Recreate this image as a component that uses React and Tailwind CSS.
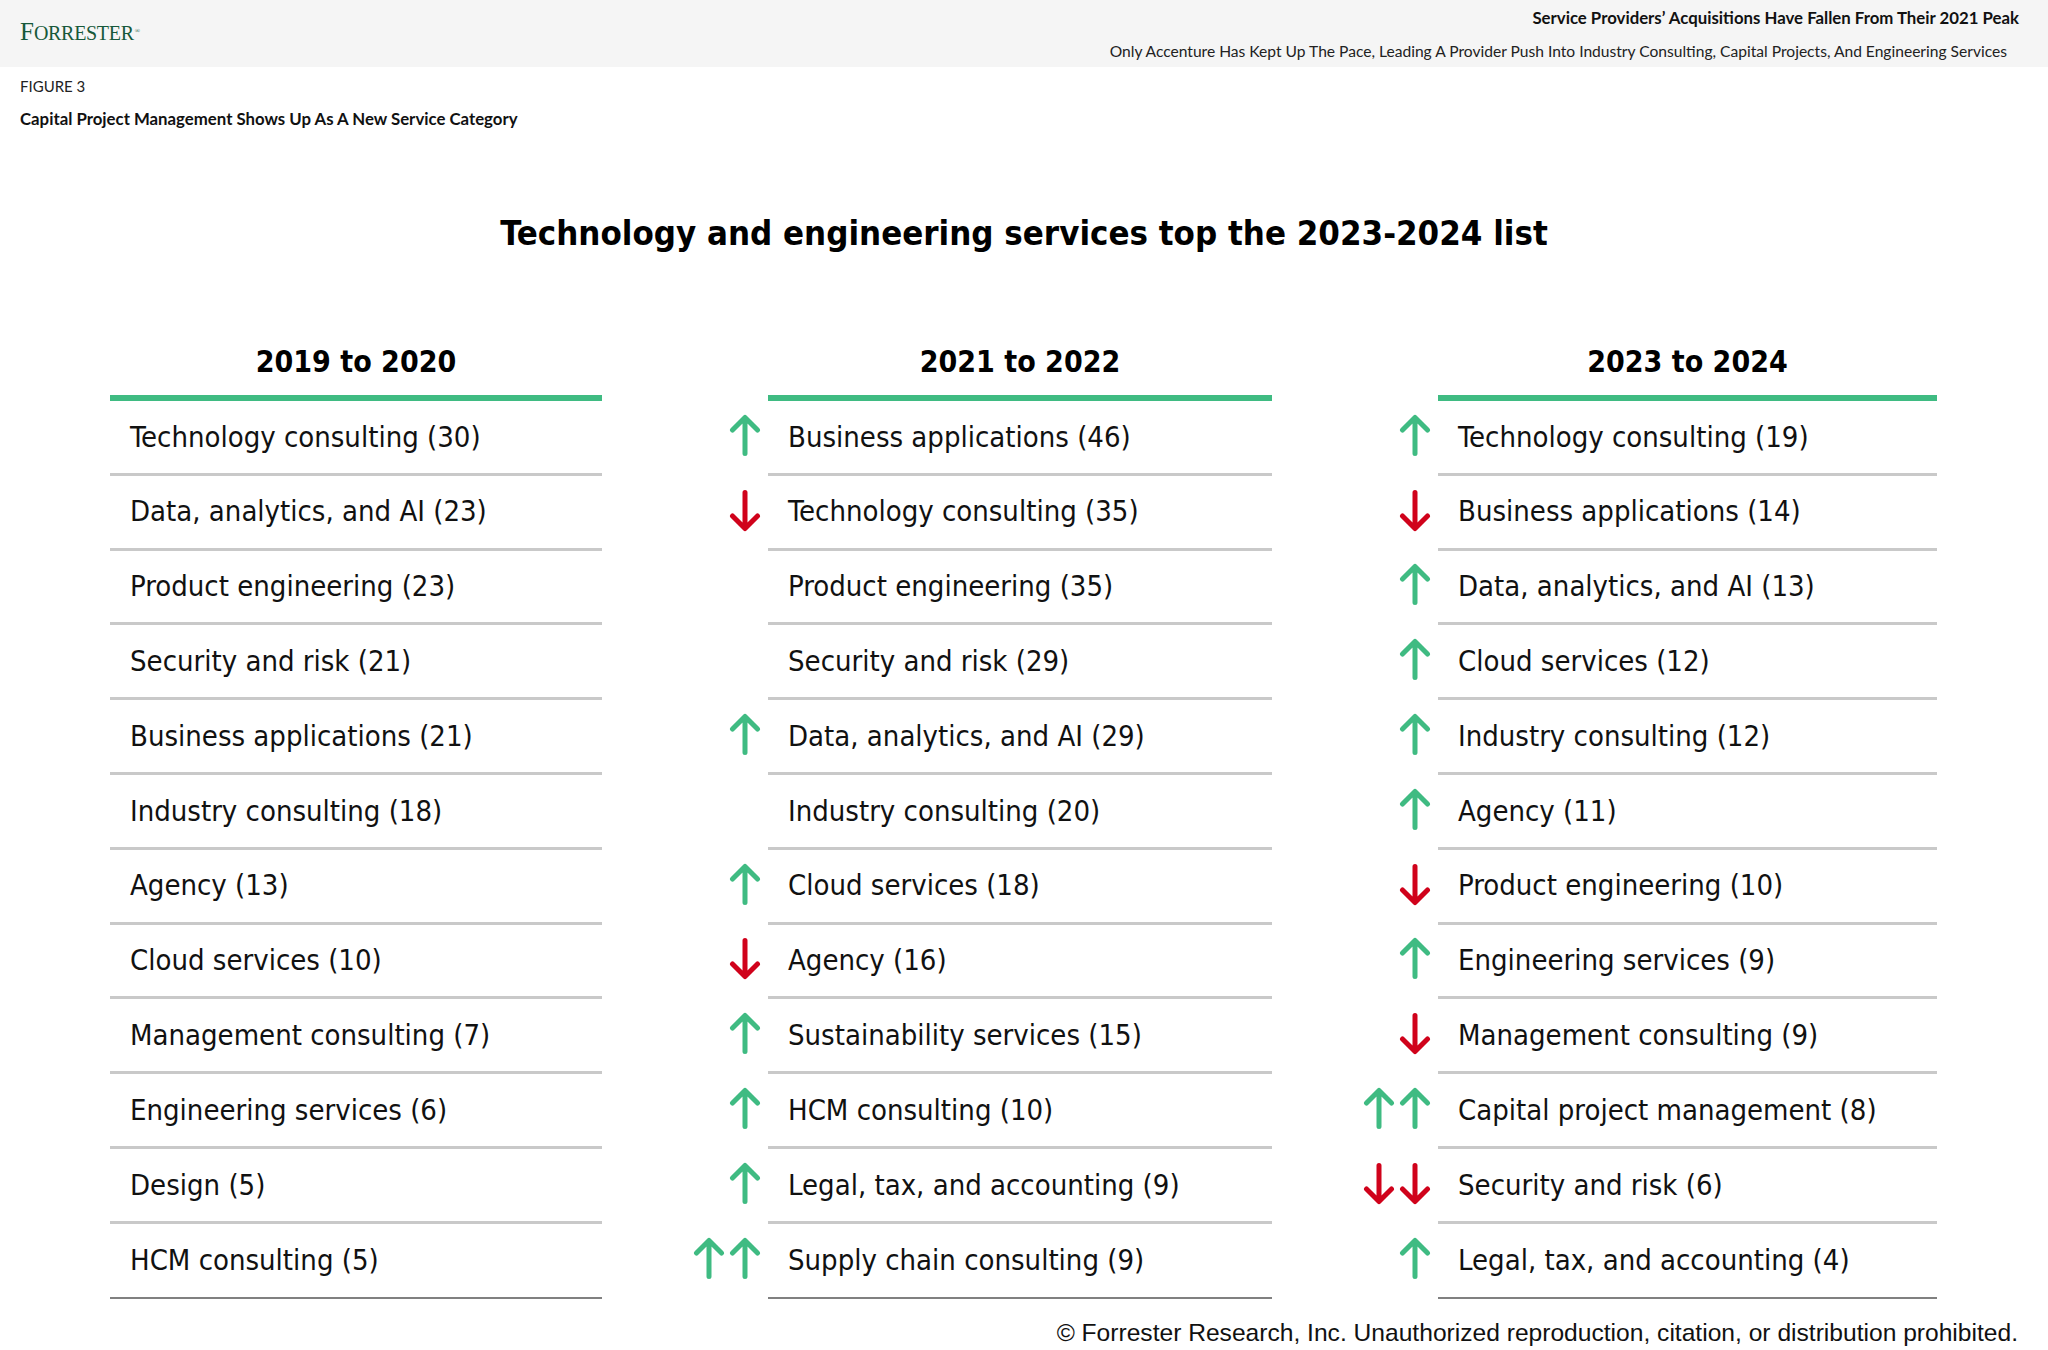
import React from "react";

const GREEN = "#3fbb82";
const RED = "#d0021b";

function Arrow({ dir }) {
  const up = dir === "up";
  return (
    <svg width="34" height="43" viewBox="0 0 34 43" className="shrink-0">
      {up ? (
        <path d="M17 39.5 V4.5 M4.5 16 L17 3.5 L29.5 16" fill="none" stroke={GREEN} strokeWidth="5" strokeLinecap="round" strokeLinejoin="round" />
      ) : (
        <path d="M17 3.5 V38.5 M4.5 27 L17 39.5 L29.5 27" fill="none" stroke={RED} strokeWidth="5" strokeLinecap="round" strokeLinejoin="round" />
      )}
    </svg>
  );
}

const col1 = [
  "Technology consulting (30)",
  "Data, analytics, and AI (23)",
  "Product engineering (23)",
  "Security and risk (21)",
  "Business applications (21)",
  "Industry consulting (18)",
  "Agency (13)",
  "Cloud services (10)",
  "Management consulting (7)",
  "Engineering services (6)",
  "Design (5)",
  "HCM consulting (5)",
].map((t) => [t, []]);

const col2 = [
  ["Business applications (46)", ["up"]],
  ["Technology consulting (35)", ["down"]],
  ["Product engineering (35)", []],
  ["Security and risk (29)", []],
  ["Data, analytics, and AI (29)", ["up"]],
  ["Industry consulting (20)", []],
  ["Cloud services (18)", ["up"]],
  ["Agency (16)", ["down"]],
  ["Sustainability services (15)", ["up"]],
  ["HCM consulting (10)", ["up"]],
  ["Legal, tax, and accounting (9)", ["up"]],
  ["Supply chain consulting (9)", ["up", "up"]],
];

const col3 = [
  ["Technology consulting (19)", ["up"]],
  ["Business applications (14)", ["down"]],
  ["Data, analytics, and AI (13)", ["up"]],
  ["Cloud services (12)", ["up"]],
  ["Industry consulting (12)", ["up"]],
  ["Agency (11)", ["up"]],
  ["Product engineering (10)", ["down"]],
  ["Engineering services (9)", ["up"]],
  ["Management consulting (9)", ["down"]],
  ["Capital project management (8)", ["up", "up"]],
  ["Security and risk (6)", ["down", "down"]],
  ["Legal, tax, and accounting (4)", ["up"]],
];

const chartFont = { fontFamily: '"DejaVu Sans Condensed", "DejaVu Sans", Verdana, sans-serif' };

function Column({ title, rows, width, gutter }) {
  return (
    <div className="flex flex-col" style={chartFont}>
      <div className="flex">
        {gutter && <div className="w-[166px] shrink-0" />}
        <div style={{ width }} className="h-[36px] flex items-center justify-center text-[30px] font-bold text-black leading-[36px]">
          {title}
        </div>
      </div>
      <div className="flex mt-[15px]">
        {gutter && <div className="w-[166px] shrink-0" />}
        <div style={{ width }} className="h-[6px] bg-[#3fbb82]" />
      </div>
      {rows.map(([t, arrows], i) => (
        <div key={i} className="flex">
          {gutter && (
            <div className="w-[166px] shrink-0 flex items-center justify-end gap-[2px] pr-[6px] pb-[6px]">
              {arrows.map((a, j) => (
                <Arrow key={j} dir={a} />
              ))}
            </div>
          )}
          <div
            style={{ width }}
            className={
              "h-[74.8px] flex items-center pl-[20px] text-[29px] text-[#111] " +
              (i === rows.length - 1 ? "border-b-2 border-[#808080]" : "border-b-[3px] border-[#c9c9c9]")
            }
          >
            <span className="pt-[1px]">{t}</span>
          </div>
        </div>
      ))}
    </div>
  );
}

export default function App() {
  return (
    <div className="w-[2048px] h-[1350px] bg-white relative overflow-hidden" style={{ fontFamily: "Lato, 'Open Sans', sans-serif" }}>
      <div className="h-[67px] bg-[#f5f5f5] flex justify-between">
        <div className="pl-[20px] pt-[18px] flex items-baseline text-[#17593a]" style={{ fontFamily: '"Liberation Serif", serif' }}>
          <span className="text-[25px] leading-[28px]">F</span>
          <span className="text-[20px] leading-[28px] tracking-[-0.3px]">ORRESTER</span>
          <span className="text-[7px] self-start mt-[8px] ml-[1px]">®</span>
        </div>
        <div className="flex flex-col items-end pt-[8px]">
          <div className="text-[16.8px] font-bold leading-[20px] text-[#111] pr-[29px]">
            Service Providers’ Acquisitions Have Fallen From Their 2021 Peak
          </div>
          <div className="mt-[13px] text-[15.6px] leading-[20px] text-[#222] pr-[41px]">
            Only Accenture Has Kept Up The Pace, Leading A Provider Push Into Industry Consulting, Capital Projects, And Engineering Services
          </div>
        </div>
      </div>

      <div className="pl-[20px] mt-[9px] text-[15px] leading-[20px] text-[#222]">FIGURE 3</div>
      <div className="pl-[20px] mt-[12px] text-[16.8px] leading-[22px] font-bold text-[#111]">
        Capital Project Management Shows Up As A New Service Category
      </div>

      <div
        className="mt-[82px] text-center text-[34.5px] font-bold leading-[42px] text-black"
        style={chartFont}
      >
        Technology and engineering services top the 2023-2024 list
      </div>

      <div className="mt-[90px] pl-[110px] flex">
        <Column title="2019 to 2020" rows={col1} width={492} />
        <Column title="2021 to 2022" rows={col2} width={504} gutter />
        <Column title="2023 to 2024" rows={col3} width={499} gutter />
      </div>

      <div
        className="mt-[20px] pr-[30px] text-right text-[24.6px] leading-[28px] text-[#111]"
        style={{ fontFamily: '"Liberation Sans", Arial, sans-serif' }}
      >
        © Forrester Research, Inc. Unauthorized reproduction, citation, or distribution prohibited.
      </div>
    </div>
  );
}
